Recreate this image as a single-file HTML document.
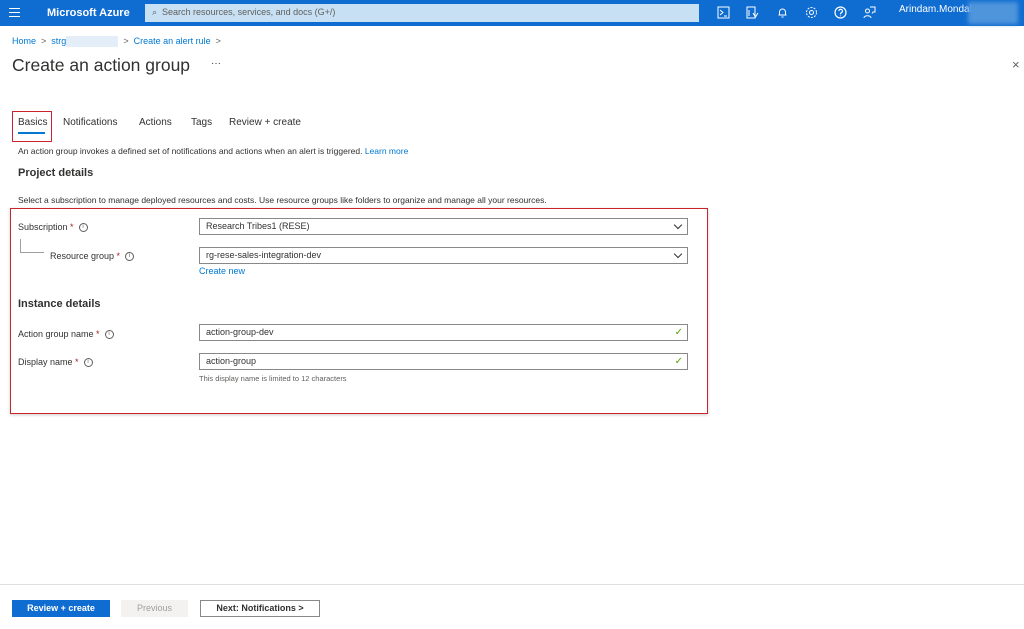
<!DOCTYPE html>
<html><head><style>
*{box-sizing:border-box;margin:0;padding:0}
body{width:1024px;height:629px;overflow:hidden;background:#fff;font-family:"Liberation Sans",sans-serif;color:#323130;position:relative}
.a{position:absolute}
.top{left:0;top:0;width:1024px;height:26px;background:#0f6cd0}
.t{font-size:10px;white-space:nowrap}
.inp{position:absolute;height:17px;border:1px solid #8a8886;background:#fff;font-size:9px;padding:2px 6px;color:#323130}
.lbl{font-size:9px}
.star{color:#a4262c}
.info{display:inline-block;width:9px;height:9px;border:1px solid #605e5c;border-radius:50%;font-size:6px;text-align:center;line-height:7px;vertical-align:middle;margin-left:5px;color:#605e5c}
.chev{position:absolute;right:6px;top:3px;width:6px;height:6px;border-right:1px solid #323130;border-bottom:1px solid #323130;transform:rotate(45deg)}
.chk{position:absolute;right:4px;top:2px;color:#57a300;font-size:10px}
.ic{position:absolute;top:6px}
</style></head><body>
<div class="a top"></div>
<div class="a" style="left:9px;top:8px;width:11px;height:1px;background:#fff;box-shadow:0 4px 0 #fff,0 8px 0 #fff"></div>
<div class="a t" style="left:47px;top:7px;color:#fff;font-size:11px;font-weight:bold">Microsoft Azure</div>
<div class="a" style="left:145px;top:4px;width:554px;height:18px;background:#c7e0f4"></div>
<div class="a t" style="left:152px;top:7px;font-size:9px;color:#605e5c">⌕ &nbsp;Search resources, services, and docs (G+/)</div>
<svg class="ic" style="left:717px" width="13" height="13" viewBox="0 0 13 13" fill="none" stroke="#fff" stroke-width="1"><rect x="1" y="1" width="11" height="11"/><path d="M3 4l3 2.5-3 2.5M7 10h3"/></svg>
<svg class="ic" style="left:746px" width="13" height="13" viewBox="0 0 13 13" fill="none" stroke="#fff" stroke-width="1"><rect x="1" y="1" width="8" height="11"/><path d="M3 4v6M7 7l2.5 4 2.5-4"/></svg>
<svg class="ic" style="left:776px" width="13" height="13" viewBox="0 0 13 13" fill="none" stroke="#fff" stroke-width="1"><path d="M3.5 9V6a3 3 0 016 0v3H3.5M2.5 9h8M5.5 11h2"/></svg>
<svg class="ic" style="left:805px" width="13" height="13" viewBox="0 0 13 13" fill="none" stroke="#fff" stroke-width="1"><circle cx="6.5" cy="6.5" r="2"/><circle cx="6.5" cy="6.5" r="5" stroke-dasharray="2 1.2"/></svg>
<svg class="ic" style="left:834px" width="13" height="13" viewBox="0 0 13 13" fill="none" stroke="#fff" stroke-width="1.2"><circle cx="6.5" cy="6.5" r="5.5"/><path d="M4.8 5a1.8 1.8 0 113 1.4c-.9.5-1.3.9-1.3 1.8M6.5 9.5v.8"/></svg>
<svg class="ic" style="left:863px" width="13" height="13" viewBox="0 0 13 13" fill="none" stroke="#fff" stroke-width="1"><circle cx="4.5" cy="5" r="2"/><path d="M1 12c0-3 7-3 7 0M7 1h5v5h-2l-1 1.5"/></svg>
<div class="a t" style="left:899px;top:4px;color:#fff;font-size:10px">Arindam.Mondal</div>
<div class="a" style="left:968px;top:2px;width:50px;height:22px;background:#4f95dc;filter:blur(2px)"></div>
<div class="a t" style="left:12px;top:36px;font-size:9px;color:#0078d4">Home &nbsp;<span style="color:#605e5c">&gt;</span>&nbsp; strg<span style="display:inline-block;width:52px;height:11px;background:#e4eef8;vertical-align:middle"></span> &nbsp;<span style="color:#605e5c">&gt;</span>&nbsp; Create an alert rule &nbsp;<span style="color:#605e5c">&gt;</span></div>
<div class="a t" style="left:12px;top:55px;font-size:17.5px">Create an action group</div>
<div class="a t" style="left:211px;top:58px;font-size:10px">···</div>
<div class="a t" style="left:1012px;top:57px;font-size:13px;color:#605e5c">×</div>
<div class="a t" style="left:18px;top:117px">Basics</div>
<div class="a" style="left:18px;top:132px;width:27px;height:2px;background:#0078d4"></div>
<div class="a" style="left:12px;top:111px;width:40px;height:31px;border:1.5px solid #c8252c"></div>
<div class="a t" style="left:63px;top:117px">Notifications</div>
<div class="a t" style="left:139px;top:117px">Actions</div>
<div class="a t" style="left:191px;top:117px">Tags</div>
<div class="a t" style="left:229px;top:117px">Review + create</div>
<div class="a t" style="left:18px;top:146px;font-size:8.5px">An action group invokes a defined set of notifications and actions when an alert is triggered. <span style="color:#0078d4">Learn more</span></div>
<div class="a t" style="left:18px;top:167px;font-size:11px;font-weight:bold">Project details</div>
<div class="a t" style="left:18px;top:195px;font-size:8.5px">Select a subscription to manage deployed resources and costs. Use resource groups like folders to organize and manage all your resources.</div>
<div class="a" style="left:10px;top:208px;width:698px;height:206px;border:1.5px solid #c8252c;box-shadow:0 1px 3px rgba(0,0,0,.2)"></div>
<div class="a lbl" style="left:18px;top:222px">Subscription <span class="star">*</span><span class="info">i</span></div>
<div class="a" style="left:20px;top:239px;width:24px;height:14px;border-left:1px solid #a19f9d;border-bottom:1px solid #a19f9d"></div>
<div class="a lbl" style="left:50px;top:251px">Resource group <span class="star">*</span><span class="info">i</span></div>
<div class="inp" style="left:199px;top:218px;width:489px">Research Tribes1 (RESE)<span class="chev"></span></div>
<div class="inp" style="left:199px;top:247px;width:489px">rg-rese-sales-integration-dev<span class="chev"></span></div>
<div class="a t" style="left:199px;top:266px;font-size:9px;color:#0078d4">Create new</div>
<div class="a t" style="left:18px;top:298px;font-size:11px;font-weight:bold">Instance details</div>
<div class="a lbl" style="left:18px;top:329px">Action group name <span class="star">*</span><span class="info">i</span></div>
<div class="inp" style="left:199px;top:324px;width:489px">action-group-dev<span class="chk">✓</span></div>
<div class="a lbl" style="left:18px;top:357px">Display name <span class="star">*</span><span class="info">i</span></div>
<div class="inp" style="left:199px;top:353px;width:489px">action-group<span class="chk">✓</span></div>
<div class="a t" style="left:199px;top:374px;font-size:7.5px;color:#605e5c">This display name is limited to 12 characters</div>
<div class="a" style="left:0;top:584px;width:1024px;height:1px;background:#e1dfdd"></div>
<div class="a t" style="left:12px;top:600px;width:98px;height:17px;background:#0f6cd0;color:#fff;font-size:9px;font-weight:bold;text-align:center;line-height:17px">Review + create</div>
<div class="a t" style="left:121px;top:600px;width:67px;height:17px;background:#f3f2f1;color:#a19f9d;font-size:9px;text-align:center;line-height:17px">Previous</div>
<div class="a t" style="left:200px;top:600px;width:120px;height:17px;border:1px solid #8a8886;font-size:9px;font-weight:bold;text-align:center;line-height:15px">Next: Notifications &gt;</div>
</body></html>
